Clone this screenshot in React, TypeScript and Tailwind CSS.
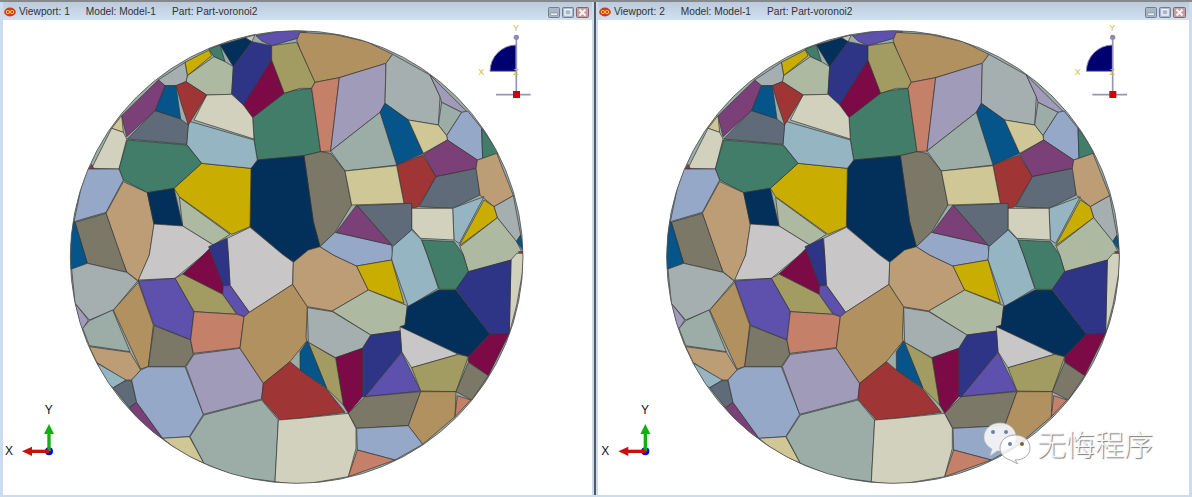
const navy = "#03305a", indigo = "#2f3586", crimson = "#7c0a47", olive = "#a39c62", tan = "#b19160", tanL = "#bc9d76",
  green = "#417d69", salmon = "#c58069", lav = "#9f9bb9", gray = "#a6afb0", sage = "#9bada6", sageL = "#aeb9a1",
  ltblue = "#95a8c8", aqua = "#95b5c3", dblue = "#05558b", khaki = "#cfc795", purple = "#7c4079", red = "#a03535",
  slate = "#5f6b78", cream = "#d1d1bd", yellow = "#c9ad00", violet = "#5e51ae", oliveG = "#7b7868", lgray = "#c9c6c7";

const cells: [string, string][] = [
  [violet, "A 558,32 620,20 690,15 B 20,20 0,38 A 605,62 575,48"],
  [lgray, "A 525,38 555,30 545,50"],
  [navy, "A 450,60 525,38 545,50 490,125"],
  [green, "A 417,72 450,60 465,110 432,95"],
  [yellow, "A 345,112 417,75 425,92 352,152"],
  [sageL, "A 352,152 432,95 465,110 490,125 485,208 410,210 348,170"],
  [gray, "A 265,165 345,112 352,152 348,170 318,182 285,182"],
  [indigo, "A 490,125 545,50 605,62 605,105 520,240 485,208"],
  [crimson, "A 605,105 643,205 548,278 520,240"],
  [olive, "A 605,62 680,52 B 0,72 45,170 35,190 0,190 A 665,198 643,205 605,105"],
  [tan, "B 0,72 -10,45 0,22 100,28 200,50 278,88 258,115 118,158 45,172"],
  [green, "A 548,278 643,205 670,197 B 35,190 62,380 12,392 A 562,405 552,342"],
  [salmon, "B 35,190 45,172 118,158 92,378 62,380"],
  [lav, "B 118,158 258,115 255,235 240,262 92,378"],
  [gray, "B 258,115 278,88 390,150 420,215 415,300 325,285 255,235"],
  [lav, "B 390,150 503,262 485,262 425,232 420,215"],
  [sage, "B 425,232 485,262 440,332 415,300"],
  [ltblue, "B 485,262 503,258 545,310 548,400 532,405 442,345 440,332"],
  [green, "B 545,310 600,385 548,400"],
  [dblue, "B 240,262 255,235 325,285 370,385 290,420"],
  [khaki, "B 325,285 415,300 440,332 442,345 370,385"],
  [sage, "B 92,378 240,262 290,420 135,438"],
  [purple, "B 370,388 442,345 532,405 530,430 408,455"],
  [red, "B 290,420 368,390 408,455 355,545 335,550 312,535"],
  [slate, "B 408,455 530,430 540,510 458,550 358,545"],
  [tanL, "B 532,405 548,400 590,385 640,512 582,545 540,510 528,430"],
  [gray, "B 582,545 640,512 662,630 648,650 592,578"],
  [yellow, "B 552,525 582,545 592,578 478,662"],
  [aqua, "B 458,550 552,515 478,655 462,645"],
  [cream, "B 335,550 458,550 462,645 362,640 335,610"],
  [sageL, "B 480,665 592,578 650,650 670,690 D 635,15 505,50 490,0"],
  [dblue, "B 662,630 672,680 650,650"],
  [red, "B 655,680 675,680 672,700"],
  [cream, "D 633,15 650,-5 672,-5 668,50 650,150 628,235"],
  [oliveG, "B 12,392 62,380 92,385 135,438 155,540 105,622 60,665 40,590"],
  [navy, "A 543,430 562,405 B 12,392 40,590 60,665 25,675 C 672,22 640,0 A 540,605"],
  [sageL, "A 328,517 338,603 430,660 480,628"],
  [yellow, "A 312,490 395,415 543,430 540,605 485,628 328,515"],
  [aqua, "A 350,358 355,288 552,345 562,405 543,430 395,415"],
  [cream, "A 372,285 410,210 485,208 520,240 548,278 552,342"],
  [red, "A 318,182 348,170 410,210 355,300 335,240"],
  [dblue, "A 255,257 285,182 318,182 332,282"],
  [purple, "A 155,272 265,165 285,182 255,257 170,335"],
  [slate, "A 172,342 255,257 332,282 355,300 350,358"],
  [khaki, "A 125,310 155,272 160,322"],
  [cream, "A 65,430 125,310 160,322 170,342 147,432"],
  [red, "A 55,435 65,418 72,432"],
  [green, "A 147,432 172,345 350,360 395,415 312,490 232,503 160,465"],
  [ltblue, "A 12,590 45,432 147,432 160,465 108,562"],
  [tanL, "A 108,565 160,470 232,503 252,600 238,690 C 205,78 170,50 150,0"],
  [navy, "A 232,503 312,490 338,603 252,597"],
  [oliveG, "A 15,592 108,565 152,690 C 170,52 52,25"],
  [dblue, "A 10,590 15,592 C 52,25 5,42 -10,42"],
  [lgray, "A 252,597 338,603 430,660 400,690 C 315,70 205,75 238,0"],
  [lgray, "A 472,640 540,607 640,690 C 670,22 668,88 538,172 480,90 475,0"],
  [indigo, "A 416,665 470,640 475,690 C 480,90 460,92"],
  [crimson, "A 400,690 418,672 C 460,92 458,118 338,57"],
  [violet, "C 460,92 480,92 538,172 522,185 500,175 458,118"],
  [olive, "C 315,70 338,57 458,118 500,178 372,170"],
  [violet, "C 205,78 315,70 372,170 362,255 252,210"],
  [tan, "C 205,82 250,210 235,335 212,342 130,165"],
  [gray, "C 5,42 52,25 170,52 203,78 130,165 58,195 15,145"],
  [lav, "C 15,145 55,195 38,222 10,190"],
  [sage, "C 38,220 58,197 128,165 180,290 58,272"],
  [tanL, "C 58,275 180,292 212,345 185,375 165,375 80,322"],
  [aqua, "C 82,325 168,375 130,398 100,380"],
  [slate, "C 130,398 168,377 185,377 200,442 178,458"],
  [purple, "C 178,458 200,442 278,550 240,535"],
  [ltblue, "C 185,375 212,345 235,335 345,335 400,478 358,545 278,550 200,442"],
  [oliveG, "C 252,212 362,255 370,298 345,335 235,335"],
  [salmon, "C 372,170 500,178 522,185 510,278 370,295 362,255"],
  [lav, "C 348,335 372,298 510,280 580,385 575,432 400,478"],
  [khaki, "C 278,550 358,545 402,625 340,600"],
  [sage, "C 360,545 402,480 575,435 625,495 615,680 500,665 402,625"],
  [tan, "C 510,280 522,185 538,172 668,88 D 0,122 22,155 18,245 20,258 C 660,320 580,385"],
  [tanL, "C 668,88 670,22 B 25,675 60,665 100,690 D 170,33 205,105 97,168 22,155 0,122"],
  [ltblue, "B 60,665 105,622 275,660 278,690 D 275,15 170,33 100,0"],
  [purple, "B 108,622 170,540 275,660"],
  [slate, "B 172,542 335,535 335,615 280,665"],
  [khaki, "B 135,438 290,422 312,535 155,540"],
  [aqua, "B 278,665 335,615 365,645 382,690 D 415,100 325,155 275,15"],
  [green, "B 365,645 462,650 490,690 D 505,50 468,103 418,103 382,0"],
  [yellow, "D 170,33 275,15 312,145 205,105"],
  [sageL, "D 97,168 205,105 322,152 315,212 300,228 212,240"],
  [navy, "D 322,155 415,105 468,105 570,238 505,305 470,295 300,215 315,210"],
  [indigo, "D 468,103 505,50 633,15 628,235 570,238"],
  [crimson, "D 570,238 628,235 565,362 505,320 505,305"],
  [lgray, "D 300,215 475,298 335,338 305,290"],
  [indigo, "D 187,280 212,240 300,228 305,290 195,425 187,425"],
  [gray, "D 22,158 97,170 212,240 187,280 107,308 25,262"],
  [crimson, "D 107,308 187,280 187,425 145,475 130,450"],
  [olive, "D 25,262 107,310 130,450 80,400"],
  [dblue, "D 0,290 22,258 80,400 0,345"],
  [red, "C 575,432 580,385 660,320 690,345 D 80,403 135,472 0,490 C 630,495"],
  [cream, "C 625,495 D 0,490 145,475 168,520 168,580 145,665 0,690 C 615,680"],
  [violet, "D 195,425 305,292 362,408"],
  [olive, "D 335,338 475,298 505,305 468,410 362,408"],
  [oliveG, "D 145,475 195,425 362,410 325,512 170,520"],
  [tan, "D 362,410 468,410 465,485 368,568 325,512"],
  [ltblue, "D 170,520 325,512 368,568 285,615 172,585"],
  [salmon, "D 172,585 285,615 145,665"],
  [salmon, "D 472,422 512,435 465,485"],
  [oliveG, "D 505,322 565,362 515,435 468,410"],
];

const origins: Record<string, [number, number]> = { A: [210, 75], B: [900, 75], C: [210, 765], D: [900, 765] };

function toPoints(spec: string) {
  let o: [number, number] = [0, 0];
  const out: string[] = [];
  for (const t of spec.split(" ")) {
    if (origins[t]) o = origins[t];
    else {
      const [x, y] = t.split(",").map(Number);
      out.push(`${x + o[0]},${y + o[1]}`);
    }
  }
  return out.join(" ");
}

function Viewport({ n, vbX, vbW }: { n: number; vbX: number; vbW: number }) {
  const clip = `disc-${n}`;
  return (
    <svg className="block w-full h-full" viewBox={`${vbX} 60 ${vbW} 1425`} preserveAspectRatio="xMinYMin meet">
      <defs>
        <clipPath id={clip}>
          <circle cx="890" cy="771" r="679" />
        </clipPath>
      </defs>
      <circle cx="890" cy="771" r="679" fill={sage} />
      <g clipPath={`url(#${clip})`}>
        {cells.map(([c, p], i) => (
          <polygon key={i} points={toPoints(p)} fill={c} stroke="#333" strokeWidth="2" strokeLinejoin="round" />
        ))}
      </g>
      <circle cx="890" cy="771" r="679" fill="none" stroke="#555" strokeWidth="2.6" />

      {/* view cube */}
      <g>
        <path d="M1470 214 L1549 214 L1549 135 A 79 79 0 0 0 1470 214 Z" fill="#000070" stroke="#8f88b8" strokeWidth="3" />
        <line x1="1549" y1="112" x2="1549" y2="284" stroke="#9a92bd" strokeWidth="5" />
        <circle cx="1549" cy="112" r="8" fill="#8f88b0" />
        <line x1="1488" y1="284" x2="1592" y2="284" stroke="#9a92bd" strokeWidth="5" />
        <rect x="1539" y="273" width="21" height="21" fill="#d00000" />
        <g fill="#cfbd4c" fontFamily="'Liberation Sans', sans-serif" fontSize="27" textAnchor="middle">
          <text x="1548" y="94">Y</text>
          <text x="1444" y="224">X</text>
          <text x="1548" y="226">Z</text>
        </g>
      </g>

      {/* triad */}
      <g>
        <circle cx="147" cy="1354" r="12" fill="#0a0ad0" />
        <line x1="147" y1="1354" x2="147" y2="1290" stroke="#10b010" strokeWidth="10" />
        <polygon points="147,1272 132,1302 162,1302" fill="#10b010" />
        <line x1="147" y1="1354" x2="85" y2="1354" stroke="#c81010" strokeWidth="10" />
        <polygon points="66,1354 96,1340 96,1368" fill="#c81010" />
        <g fill="#111" fontFamily="'Liberation Sans', sans-serif" fontSize="36" textAnchor="middle">
          <text x="146" y="1242">Y</text>
          <text x="27" y="1366">X</text>
        </g>
      </g>
    </svg>
  );
}

function LogoIcon() {
  return (
    <svg width="12" height="10" viewBox="0 0 12 10" className="shrink-0">
      <ellipse cx="6" cy="5" rx="5.8" ry="4.4" fill="#d8342a" />
      <circle cx="3.9" cy="5" r="2.1" fill="#f5d23a" />
      <circle cx="8.1" cy="5" r="2.1" fill="#f5d23a" />
      <circle cx="3.9" cy="5" r="0.9" fill="#a51d12" />
      <circle cx="8.1" cy="5" r="0.9" fill="#a51d12" />
    </svg>
  );
}

function WinButtons() {
  return (
    <div className="flex items-center gap-[2px] ml-auto mr-[1px]">
      <svg width="12" height="11" viewBox="0 0 12 11">
        <rect x="0.5" y="0.5" width="11" height="10" rx="1" fill="#a9b7c8" stroke="#6f7f92" />
        <rect x="2.5" y="6" width="7" height="2.4" rx="0.6" fill="#f2f5f8" stroke="#5e6b7a" strokeWidth="0.5" />
      </svg>
      <svg width="12" height="11" viewBox="0 0 12 11">
        <rect x="0.5" y="0.5" width="11" height="10" rx="1" fill="#a9b7c8" stroke="#6f7f92" />
        <rect x="3" y="2.6" width="6" height="5.4" fill="none" stroke="#f2f5f8" strokeWidth="1.4" />
      </svg>
      <svg width="13" height="11" viewBox="0 0 13 11">
        <rect x="0.5" y="0.5" width="12" height="10" rx="1" fill="#c2a0a4" stroke="#8a6468" />
        <path d="M3.5 2.5 L9.5 8.5 M9.5 2.5 L3.5 8.5" stroke="#fbf5f5" strokeWidth="2" />
      </svg>
    </div>
  );
}

function Win({ n, vbX, vbW }: { n: number; vbX: number; vbW: number }) {
  return (
    <div className="flex flex-col h-full">
      <div className="h-[18px] shrink-0 flex items-center pt-[2px] pl-[1px] pr-[2px] text-[10.2px] text-[#333] bg-gradient-to-b from-[#bccbdc] to-[#cfe0f1] [font-family:'Liberation_Sans',sans-serif]">
        <LogoIcon />
        <span className="ml-[3px]">Viewport: {n}</span>
        <span className="ml-[16px]">Model: Model-1</span>
        <span className="ml-[16px]">Part: Part-voronoi2</span>
        <WinButtons />
      </div>
      <div className="flex-1 min-h-0 bg-white">
        <Viewport n={n} vbX={vbX} vbW={vbW} />
      </div>
    </div>
  );
}

export default function App() {
  return (
    <div className="relative w-[1192px] h-[497px] overflow-hidden flex flex-col bg-[#cbdcee]">
      <div className="h-[2px] shrink-0 bg-[#85888c]" />
      <div className="flex-1 min-h-0 flex pb-[2px]">
        <div className="w-[594px] shrink-0 pl-[3px] pr-[2px]">
          <Win n={1} vbX={9} vbW={1767} />
        </div>
        <div className="w-[2px] shrink-0 bg-[#55595d]" />
        <div className="flex-1 min-w-0 pl-[2px] pr-[3px]">
          <Win n={2} vbX={5} vbW={1773} />
        </div>
      </div>

      <div className="absolute left-[983px] top-[422px] flex items-center">
        <svg width="50" height="42" viewBox="0 0 50 42">
          <path d="M17 1 C26 1 33 7 33 15 C33 23 26 29 17 29 L14 29 L7 34 L9 27 C4 24 1 20 1 15 C1 7 8 1 17 1 Z" fill="#f4f5f8" fillOpacity="0.92" stroke="#b9b9b9" strokeWidth="0.6" />
          <path d="M32 13 C41 13 47 19 47 26 C47 33 41 38 32 38 L35 42 L27 38 C21 36 17 32 17 26 C17 19 23 13 32 13 Z" fill="#ffffff" fillOpacity="0.85" stroke="#a9a9a9" strokeWidth="1" />
          <circle cx="10" cy="10" r="2" fill="#6f7fa8" />
          <circle cx="23" cy="10" r="2" fill="#6f7fa8" />
          <circle cx="27" cy="22" r="2" fill="#6f7fa8" />
          <circle cx="39" cy="22" r="2" fill="#7a6238" />
        </svg>
        <span className="ml-[4px] text-[29px] leading-none text-[#f7f7f7] [font-family:'Noto_Sans_CJK_SC',sans-serif] font-light [text-shadow:1px_1px_1px_#777]">无悔程序</span>
      </div>
    </div>
  );
}
